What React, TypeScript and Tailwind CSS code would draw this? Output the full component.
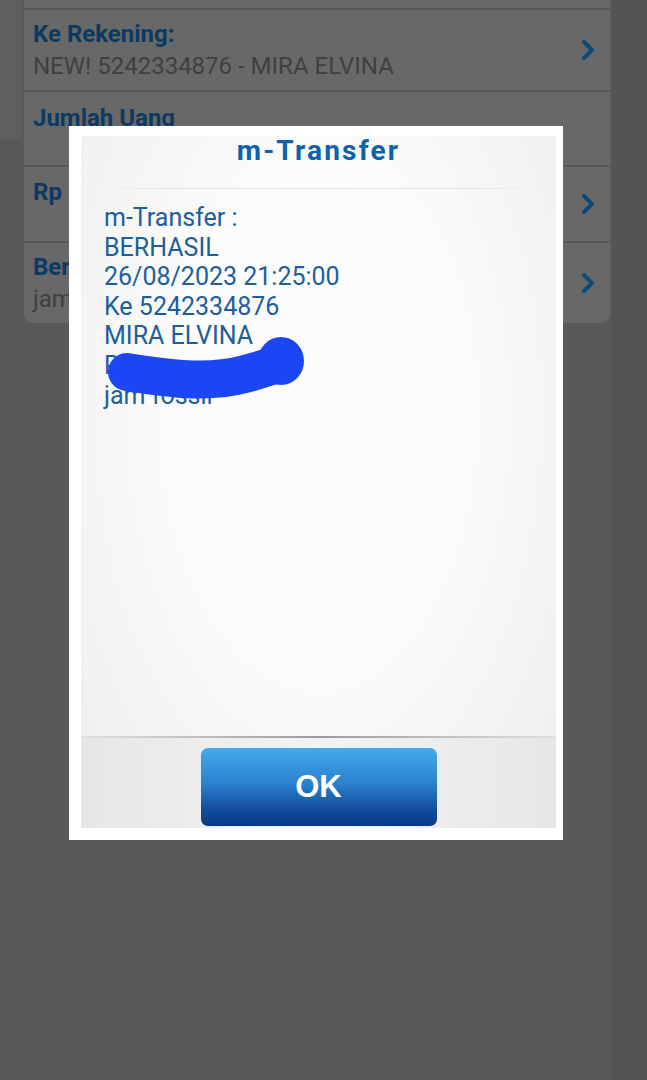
import React from "react";

function Chevron() {
  return (
    <svg width="16" height="22" viewBox="0 0 16 22" className="shrink-0">
      <polyline points="4,3 12,11 4,19" fill="none" stroke="#0f4a76" strokeWidth="4" strokeLinecap="round" strokeLinejoin="round" />
    </svg>
  );
}

export default function App() {
  return (
    <div
      className="relative h-[1080px] w-full overflow-hidden bg-[#585858]"
      style={{ fontFamily: "Roboto, 'Noto Sans', sans-serif" }}
    >
      <div className="absolute inset-x-0 top-0 h-[140px] bg-[#5e5e5e]" />
      <div className="absolute right-0 top-0 h-[1080px] w-[35px] bg-[#535353]" />
      <div className="relative ml-[22px] mr-[35px] overflow-hidden rounded-b-[12px] border-2 border-t-0 border-[#5a5a5a] bg-[#686868]">
        <div className="h-[10px] border-b-2 border-[#575757]" />
        <div className="flex h-[82px] items-center border-b-2 border-[#575757] pl-[9px] pr-[14px]">
          <div className="flex flex-1 flex-col">
            <div className="text-[24px] font-bold leading-[32px] text-[#0d3a62]">Ke Rekening:</div>
            <div className="text-[24px] leading-[32px] text-[#404040]">NEW! 5242334876 - MIRA ELVINA</div>
          </div>
          <Chevron />
        </div>
        <div className="flex h-[75px] items-start border-b-2 border-[#575757] pl-[9px] pr-[14px] pt-[10px]">
          <div className="text-[24px] font-bold leading-[32px] text-[#0d3a62]">Jumlah Uang</div>
        </div>
        <div className="flex h-[76px] items-center border-b-2 border-[#575757] pl-[9px] pr-[14px]">
          <div className="flex-1 self-start pt-[9px] text-[24px] font-bold leading-[32px] text-[#0d3a62]">Rp</div>
          <Chevron />
        </div>
        <div className="flex h-[80px] items-center pl-[9px] pr-[14px]">
          <div className="flex flex-1 flex-col">
            <div className="text-[24px] font-bold leading-[32px] text-[#0d3a62]">Berita</div>
            <div className="text-[24px] leading-[32px] text-[#404040]">jam fossil</div>
          </div>
          <Chevron />
        </div>
      </div>

      {/* modal */}
      <div className="absolute left-[69px] top-[126px] h-[714px] w-[494px] bg-white pb-[12px] pl-[12px] pr-[7px] pt-[10px]">
        <div className="relative flex h-full flex-col overflow-hidden rounded-[3px] bg-[radial-gradient(ellipse_at_50%_40%,#fcfcfc_40%,#ededed_100%)]">
          <div className="flex h-[52px] items-start justify-center text-[28px] font-bold leading-[29px] tracking-[2.2px] text-[#0c63ad]">
            m-Transfer
          </div>
          <div className="mx-[18px] h-[1px] bg-[linear-gradient(90deg,transparent,#e2e2e2_15%,#e2e2e2_85%,transparent)]" />
          <div className="flex-1 pl-[23px] pt-[14px] text-[25px] leading-[29.6px] text-[#1d5e9c]">
            <div>m-Transfer :</div>
            <div>BERHASIL</div>
            <div>26/08/2023 21:25:00</div>
            <div>Ke 5242334876</div>
            <div>MIRA ELVINA</div>
            <div>Rp</div>
            <div>jam fossil</div>
          </div>
          <div className="h-[2px] bg-[linear-gradient(90deg,#e0e0e2,#9a9aa4_50%,#e0e0e2)]" />
          <div className="flex h-[90px] justify-center bg-[linear-gradient(90deg,#e6e6e6,#f3f3f3_50%,#e6e6e6)] pt-[10px]">
            <div
              className="flex h-[78px] w-[236px] items-center justify-center rounded-[7px] bg-[linear-gradient(180deg,#44aaeb_0%,#2a82cf_45%,#124c9b_80%,#093884_100%)] text-[31px] font-bold text-white"
              style={{ fontFamily: "'Liberation Sans', Arial, sans-serif" }}
            >
              OK
            </div>
          </div>
        </div>
      </div>

      {/* scribble */}
      <svg className="absolute left-0 top-0" width="647" height="1080" viewBox="0 0 647 1080">
        <path d="M127 372 C 160 377, 205 385, 245 374 S 278 363, 282 362" fill="none" stroke="#1b46f3" strokeWidth="38" strokeLinecap="round" />
        <ellipse cx="281" cy="361" rx="23" ry="24" fill="#1b46f3" />
      </svg>
    </div>
  );
}
